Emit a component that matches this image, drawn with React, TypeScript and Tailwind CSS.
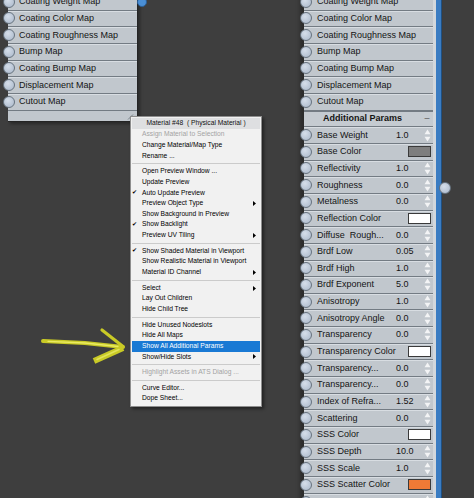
import React from "react";

// ============================================================================
// DATA
// ============================================================================

type Param =
  | { kind: "num"; label: string; value: string }
  | { kind: "color"; label: string; color: string };

type MenuEntry =
  | "sep"
  | { label: string; check?: boolean; sub?: boolean; disabled?: boolean; active?: boolean };

const MAPS = [
  "Coating Weight Map",
  "Coating Color Map",
  "Coating Roughness Map",
  "Bump Map",
  "Coating Bump Map",
  "Displacement Map",
  "Cutout Map",
];

const PARAMS: Param[] = [
  { kind: "num", label: "Base Weight", value: "1.0" },
  { kind: "color", label: "Base Color", color: "#7e7e7e" },
  { kind: "num", label: "Reflectivity", value: "1.0" },
  { kind: "num", label: "Roughness", value: "0.0" },
  { kind: "num", label: "Metalness", value: "0.0" },
  { kind: "color", label: "Reflection Color", color: "#ffffff" },
  { kind: "num", label: "Diffuse  Rough...", value: "0.0" },
  { kind: "num", label: "Brdf Low", value: "0.05" },
  { kind: "num", label: "Brdf High", value: "1.0" },
  { kind: "num", label: "Brdf Exponent", value: "5.0" },
  { kind: "num", label: "Anisotropy", value: "1.0" },
  { kind: "num", label: "Anisotropy Angle", value: "0.0" },
  { kind: "num", label: "Transparency", value: "0.0" },
  { kind: "color", label: "Transparency Color", color: "#ffffff" },
  { kind: "num", label: "Transparency...", value: "0.0" },
  { kind: "num", label: "Transparency...", value: "0.0" },
  { kind: "num", label: "Index of Refra...", value: "1.52" },
  { kind: "num", label: "Scattering", value: "0.0" },
  { kind: "color", label: "SSS Color", color: "#ffffff" },
  { kind: "num", label: "SSS Depth", value: "10.0" },
  { kind: "num", label: "SSS Scale", value: "1.0" },
  { kind: "color", label: "SSS Scatter Color", color: "#f07a36" },
  { kind: "num", label: "", value: "" },
];

const MENU: MenuEntry[] = [
  { label: "Assign Material to Selection", disabled: true },
  { label: "Change Material/Map Type" },
  { label: "Rename ..." },
  "sep",
  { label: "Open Preview Window ..." },
  { label: "Update Preview" },
  { label: "Auto Update Preview", check: true },
  { label: "Preview Object Type", sub: true },
  { label: "Show Background in Preview" },
  { label: "Show Backlight", check: true },
  { label: "Preview UV Tiling", sub: true },
  "sep",
  { label: "Show Shaded Material in Viewport", check: true },
  { label: "Show Realistic Material in Viewport" },
  { label: "Material ID Channel", sub: true },
  "sep",
  { label: "Select", sub: true },
  { label: "Lay Out Children" },
  { label: "Hide Child Tree" },
  "sep",
  { label: "Hide Unused Nodeslots" },
  { label: "Hide All Maps" },
  { label: "Show All Additional Params", active: true },
  { label: "Show/Hide Slots", sub: true },
  "sep",
  { label: "Highlight Assets in ATS Dialog ...", disabled: true },
  "sep",
  { label: "Curve Editor..." },
  { label: "Dope Sheet..." },
];

// ============================================================================
// SMALL PARTS
// ============================================================================

// input socket - sits half over the node's left edge
function Socket({ className }: { className: string }) {
  return (
    <span
      className={`absolute top-1/2 h-[12px] w-[12px] -translate-y-1/2 rounded-full border border-[#67737f] bg-[radial-gradient(circle_at_40%_35%,#d5deea,#a8b6c8)] ${className}`}
    />
  );
}

function Spinner() {
  return (
    <svg width="7" height="13" viewBox="0 0 7 13" className="shrink-0">
      <path d="M3.5 0.5 L6.5 5.3 L0.5 5.3 Z" fill="#f3f4f5" />
      <path d="M0.5 7.7 L6.5 7.7 L3.5 12.5 Z" fill="#f3f4f5" />
    </svg>
  );
}

function SubArrow({ color }: { color: string }) {
  return (
    <svg width="3" height="5" viewBox="0 0 3 5" className="ml-auto shrink-0">
      <path d="M0 0 L3 2.5 L0 5 Z" fill={color} />
    </svg>
  );
}

// ============================================================================
// NODE ROWS
// ============================================================================

function MapRow({ label, socketClass, padClass }: { label: string; socketClass: string; padClass: string }) {
  return (
    <div
      className={`relative flex h-[16.67px] items-center border-b border-[#737b83] bg-[#c1c7cd] shadow-[inset_0_1px_0_#d8dde2] ${padClass}`}
    >
      <Socket className={socketClass} />
      <span className="whitespace-pre">{label}</span>
    </div>
  );
}

function ParamRow({ param }: { param: Param }) {
  return (
    <div className="relative flex h-[16.67px] items-center border-b border-[#737b83] bg-[#c1c7cd] pl-[13px] shadow-[inset_0_1px_0_#d8dde2]">
      <Socket className="left-[-4px]" />
      {param.kind === "num" ? (
        <>
          <span className="w-[79px] whitespace-pre">{param.label}</span>
          <span className="w-[28px]">{param.value}</span>
          <Spinner />
        </>
      ) : (
        <>
          <span className="flex-1 whitespace-pre">{param.label}</span>
          <span
            className="mr-[2px] h-[11px] w-[23px] border border-[#3a3a3a]"
            style={{ backgroundColor: param.color }}
          />
        </>
      )}
    </div>
  );
}

// ============================================================================
// CONTEXT MENU
// ============================================================================

function MenuItem({ entry }: { entry: Exclude<MenuEntry, "sep"> }) {
  const color = entry.active ? "text-white" : entry.disabled ? "text-[#a3a3a3]" : "text-black";
  return (
    <div
      className={`relative flex h-[10.65px] items-center pl-[10px] pr-[4px] ${color} ${entry.active ? "bg-[#1979d4]" : ""}`}
    >
      {entry.check && (
        <span className="absolute left-[0px] top-[1px] text-[6px] leading-none [font-family:'DejaVu_Sans',sans-serif]">
          ✔
        </span>
      )}
      <span className="whitespace-nowrap">{entry.label}</span>
      {entry.sub && <SubArrow color={entry.active ? "#ffffff" : "#000000"} />}
    </div>
  );
}

function ContextMenu() {
  return (
    <div className="absolute left-[130px] top-[116px] w-[132px] border border-[#8e8e8e] bg-[#f1f1f1] px-[1px] pb-[2px] pt-[1px] text-[6.7px] leading-none shadow-[2px_2px_3px_rgba(0,0,0,0.45)]">
      <div className="flex h-[11.4px] items-center justify-center bg-[#dedfe1] text-[#111]">
        Material #48&nbsp;&nbsp;( Physical Material )
      </div>
      {MENU.map((entry, i) =>
        entry === "sep" ? (
          <div key={i} className="flex h-[5px] items-center">
            <div className="h-px w-full bg-[#cbcbcb]" />
          </div>
        ) : (
          <MenuItem key={i} entry={entry} />
        )
      )}
    </div>
  );
}

// ============================================================================
// MAIN
// ============================================================================

export default function App() {
  return (
    <div className="relative h-[498px] w-[474px] overflow-hidden bg-[#3e3e3e] text-[9px] leading-none text-[#141414] [font-family:'Liberation_Sans',Arial,sans-serif]">
      {/* Left node (maps only) */}
      <div className="absolute left-[8px] top-[-6px] w-[130px] border-b border-r border-[#242424] shadow-[2px_2px_3px_rgba(0,0,0,0.35)]">
        {MAPS.map((m) => (
          <MapRow key={m} label={m} socketClass="left-[-5px]" padClass="pl-[11px]" />
        ))}
        <div className="flex h-[10px] items-end justify-end bg-[#c1c7cd] pb-[1px] pr-[2px]">
          <svg width="8" height="6" viewBox="0 0 8 6">
            <path d="M1 5.5 L6 0.5 M4 5.5 L7.5 2" stroke="#6b737b" strokeWidth="0.8" />
          </svg>
        </div>
      </div>
      {/* left node output socket */}
      <span className="absolute left-[137px] top-[-3px] h-[10px] w-[10px] rounded-full border border-[#2c5f96] bg-[#4a8fd6]" />

      {/* Right node (maps + additional params) */}
      <div className="absolute left-[304px] top-[-6px] flex shadow-[-4px_0_4px_rgba(0,0,0,0.3)]">
        <div className="w-[129px]">
          {MAPS.map((m) => (
            <MapRow key={m} label={m} socketClass="left-[-4px]" padClass="pl-[13px]" />
          ))}
          <div className="flex h-[16.67px] items-center border-b border-t border-[#737b83] bg-[#c5cbd1] font-bold">
            <span className="flex-1 text-center">Additional Params</span>
            <span className="w-[12px] text-center font-normal text-[#555]">–</span>
          </div>
          {PARAMS.map((p, i) => (
            <ParamRow key={i} param={p} />
          ))}
        </div>
        <div className="w-[3px] bg-[#d2d7dc]" />
        <div className="w-[6px] border-r border-[#1f4f80] bg-[#3a7cc2]" />
      </div>
      {/* right node output socket */}
      <span className="absolute left-[439px] top-[182px] h-[12px] w-[12px] rounded-full border border-[#67737f] bg-[radial-gradient(circle_at_40%_35%,#d5deea,#a8b6c8)]" />

      {/* Yellow annotation arrow */}
      <svg className="absolute left-[40px] top-[326px]" width="90" height="40" viewBox="40 326 90 40">
        <path d="M43 341 L85 343 L123 347" stroke="#c9ca26" strokeWidth="4" strokeLinecap="round" fill="none" />
        <path d="M102 330 L123 346.5" stroke="#c9ca26" strokeWidth="3.2" strokeLinecap="round" />
        <path d="M94 361 L123 348" stroke="#c9ca26" strokeWidth="6" strokeLinecap="butt" />
        <path d="M48 341.3 L85 343 L118 346.5" stroke="#e9ea63" strokeWidth="1.3" strokeLinecap="round" fill="none" />
        <path d="M97 359.5 L119 349.5" stroke="#e2e35a" strokeWidth="1.5" strokeLinecap="round" />
      </svg>

      <ContextMenu />
    </div>
  );
}
